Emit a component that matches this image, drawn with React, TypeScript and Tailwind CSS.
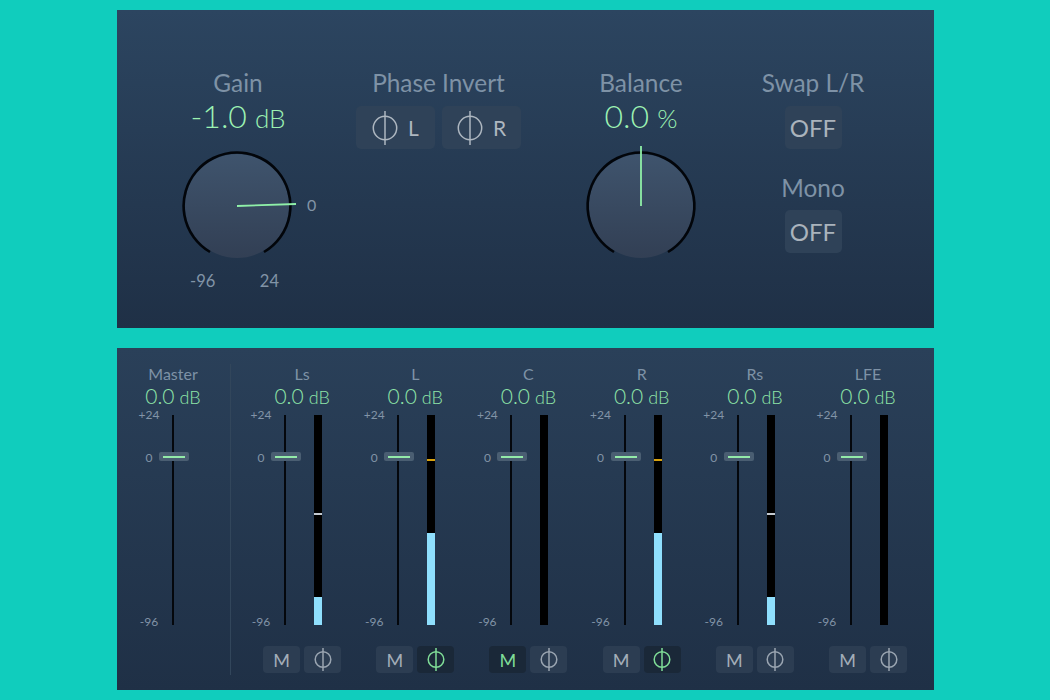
import React from "react";

function Phi({ size = "lg", color = "#aeb7c0" }: { size?: "lg" | "sm"; color?: string }) {
  const big = size === "lg";
  const w = big ? 26 : 18;
  const h = big ? 34 : 23;
  return (
    <svg width={w} height={h} viewBox={`0 0 ${w} ${h}`} fill="none" stroke={color} strokeWidth={1.5}>
      <circle cx={w / 2} cy={h / 2} r={big ? 11.7 : 7.8} />
      <line x1={w / 2} y1={0} x2={w / 2} y2={h} />
    </svg>
  );
}

function Knob({ x2, y2 }: { x2: number; y2: number }) {
  return (
    <svg width="124" height="124" viewBox="-62 -62 124 124" fill="none" className="block">
      <defs>
        <linearGradient id="knobFill" x1="0" y1="0" x2="0" y2="1">
          <stop offset="0" stopColor="#3f546d" />
          <stop offset="1" stopColor="#323f54" />
        </linearGradient>
      </defs>
      <circle cx="0" cy="0" r="52" fill="url(#knobFill)" />
      <path d="M -27 46 A 53.4 53.4 0 1 1 27 46" stroke="#02050a" strokeWidth="2.6" />
      <line x1="0" y1="0" x2={x2} y2={y2} stroke="#8ff0a8" strokeWidth="1.8" />
    </svg>
  );
}

function Value({ num, unit }: { num: string; unit: string }) {
  return (
    <div className="h-[36px] flex items-baseline justify-center gap-[8px] text-[#9cf2b2] leading-[36px] font-light">
      <span className="text-[32px]">{num}</span>
      <span className="text-[26px]">{unit}</span>
    </div>
  );
}

function Label({ children }: { children: React.ReactNode }) {
  return <div className="h-[28px] leading-[28px] text-[24.4px] text-center text-[#7e92a6] whitespace-nowrap">{children}</div>;
}

function ChannelButton({ active, children }: { active?: boolean; children: React.ReactNode }) {
  return (
    <div className={`w-[37px] h-[27px] rounded-[4px] flex items-center justify-center ${active ? "bg-[#1a2838]" : "bg-[#2c3d52]"}`}>
      {children}
    </div>
  );
}

function SmallValue() {
  return (
    <div className="h-[24px] flex items-baseline justify-center gap-[5px] text-[#8fe5a8] leading-[24px] whitespace-nowrap font-light">
      <span className="text-[21px]">0.0</span>
      <span className="text-[18px]">dB</span>
    </div>
  );
}

function Fader({ meter }: { meter?: React.ReactNode }) {
  return (
    <div className="flex h-[210px] mt-[7px]">
      <div className="w-[43px] flex flex-col items-center text-[12px] leading-[14px] text-[#8294a7] -mt-[7px] pr-[3px]">
        <span>+24</span>
        <span className="mt-[29px]">0</span>
        <span className="mt-[150px]">-96</span>
      </div>
      <div className="relative w-[2px] h-[210px] bg-[#04070c]">
        <div className="absolute left-[-13px] top-[37px] w-[30px] h-[9px] rounded-[2px] bg-[#4a5e72] flex items-center justify-center">
          <div className="w-[22px] h-[2px] bg-[#93eaa9]" />
        </div>
      </div>
      {meter}
    </div>
  );
}

function Meter({ fill, mark }: { fill?: "low" | "high"; mark?: "white" | "yellow" }) {
  return (
    <div className="relative ml-[28px] w-[8px] h-[210px] bg-black flex flex-col justify-end">
      {fill === "low" && <div className="h-[28px] bg-[#8fdffd]" />}
      {fill === "high" && <div className="h-[92px] bg-[#8fdffd]" />}
      {mark === "white" && <div className="absolute left-0 top-[98px] w-full h-[2px] bg-[#c4cad1]" />}
      {mark === "yellow" && <div className="absolute left-0 top-[44px] w-full h-[2px] bg-[#d9a30f]" />}
    </div>
  );
}

function Channel({ name, fill, mark, mute, phase }: { name: string; fill?: "low" | "high"; mark?: "white" | "yellow"; mute?: boolean; phase?: boolean }) {
  return (
    <div className="w-[113.2px] pl-[10px] pt-[15px]">
      <div className="pl-[19px]">
        <div className="h-[21px] leading-[21px] text-[16px] text-center text-[#7e92a6]">{name}</div>
        <SmallValue />
      </div>
      <Fader meter={<Meter fill={fill} mark={mark} />} />
      <div className="flex justify-center gap-[4px] mt-[21px] pl-[19px]">
        <ChannelButton active={mute}>
          <span className={`text-[18px] leading-none ${mute ? "text-[#7fdc97]" : "text-[#a3adb8]"}`}>M</span>
        </ChannelButton>
        <ChannelButton active={phase}>
          <Phi size="sm" color={phase ? "#7fdc97" : "#9aa5b1"} />
        </ChannelButton>
      </div>
    </div>
  );
}

export default function App() {
  return (
    <div className="w-[1050px] h-[700px] bg-[#10cdbd] pt-[10px] pl-[117px] overflow-hidden font-['Lato',sans-serif]">
      <div className="w-[817px] h-[318px] bg-gradient-to-b from-[#2c4560] to-[#1f3046] flex pt-[59px] pl-[51px]">
        <div className="w-[140px]">
          <Label>Gain</Label>
          <div className="mt-[1px]"><Value num="-1.0" unit="dB" /></div>
          <div className="relative flex justify-center mt-[10px] pr-[2px]">
            <Knob x2={59} y2={-2} />
            <span className="absolute left-[139px] top-[53px] text-[16px] leading-[16px] text-[#8294a7]">0</span>
          </div>
          <div className="flex justify-between w-[89px] ml-[22px] text-[16.5px] leading-[20px] text-[#8294a7] mt-[3px]">
            <span>-96</span>
            <span>24</span>
          </div>
        </div>
        <div className="w-[165px] ml-[48px]">
          <Label>Phase Invert</Label>
          <div className="flex justify-between mt-[9px]">
            {["L", "R"].map((c) => (
              <div key={c} className="w-[79px] h-[43px] rounded-[5px] bg-[#2f4258] flex items-center justify-center gap-[10px]">
                <Phi />
                <span className="text-[21px] text-[#aeb7c0]">{c}</span>
              </div>
            ))}
          </div>
        </div>
        <div className="w-[140px] ml-[50px]">
          <Label>Balance</Label>
          <div className="mt-[1px]"><Value num="0.0" unit="%" /></div>
          <div className="flex justify-center mt-[10px]">
            <Knob x2={0} y2={-60} />
          </div>
        </div>
        <div className="w-[110px] ml-[47px] flex flex-col items-center">
          <Label>Swap L/R</Label>
          <div className="w-[57px] h-[43px] mt-[9px] rounded-[5px] bg-[#2f4258] flex items-center justify-center text-[24px] text-[#aab3bc]">OFF</div>
          <div className="mt-[25px]"><Label>Mono</Label></div>
          <div className="w-[57px] h-[43px] mt-[8px] rounded-[5px] bg-[#2f4258] flex items-center justify-center text-[24px] text-[#aab3bc]">OFF</div>
        </div>
      </div>
      <div className="w-[817px] h-[342px] mt-[20px] bg-gradient-to-b from-[#2a4059] to-[#1f3046] flex">
        <div className="w-[114px] pl-[12px] pt-[15px] relative">
          <div className="w-[88px]">
            <div className="h-[21px] leading-[21px] text-[16px] text-center text-[#7e92a6]">Master</div>
            <SmallValue />
          </div>
          <Fader />
          <div className="absolute right-0 top-[16px] bottom-[15px] w-[1px] bg-[#32465b]" />
        </div>
        <Channel name="Ls" fill="low" mark="white" />
        <Channel name="L" fill="high" mark="yellow" phase />
        <Channel name="C" mute />
        <Channel name="R" fill="high" mark="yellow" phase />
        <Channel name="Rs" fill="low" mark="white" />
        <Channel name="LFE" />
      </div>
    </div>
  );
}
